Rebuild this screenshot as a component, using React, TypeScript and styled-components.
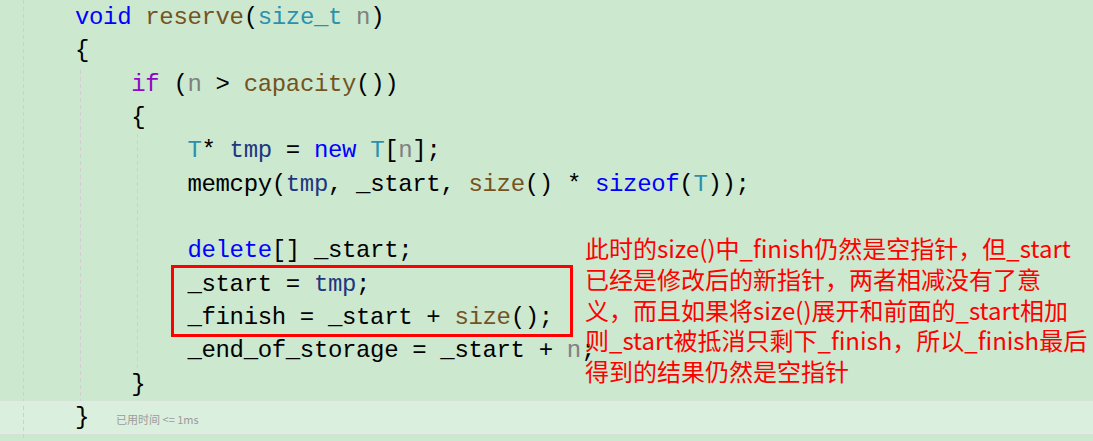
import React from "react";
import styled, { createGlobalStyle } from "styled-components";

const Global = createGlobalStyle`
  html, body { margin: 0; padding: 0; background: #cce8cf; }
  #root { width: 1093px; height: 441px; }
`;

const GUIDE = "repeating-linear-gradient(to bottom, #d4ccd4 0px, #d4ccd4 4px, transparent 4px, transparent 7px)";

const Editor = styled.div`
  position: relative;
  width: 1093px;
  height: 441px;
  overflow: hidden;
  background-color: #cce8cf;
  background-image: ${GUIDE};
  background-size: 1px 100%;
  background-position: 23px 0;
  background-repeat: repeat-y;
  background-attachment: fixed;
  padding-top: 1px;
  box-sizing: border-box;
`;

const Line = styled.div<{ $guides: number[]; $current?: boolean }>`
  height: 33.33px;
  box-sizing: border-box;
  padding-left: 75px;
  white-space: pre;
  font-family: "Liberation Mono", "DejaVu Sans Mono", monospace;
  font-size: 24px;
  letter-spacing: -0.35px;
  color: #000000;
  line-height: ${(p) => (p.$current ? "29.33px" : "33.33px")};
  background-color: ${(p) => (p.$current ? "#dbefde" : "transparent")};
  border-top: ${(p) => (p.$current ? "2px solid #e3e9e4" : "none")};
  border-bottom: ${(p) => (p.$current ? "2px solid #e3e9e4" : "none")};
  background-image: ${(p) => (p.$guides.length ? p.$guides.map(() => GUIDE).join(", ") : "none")};
  background-position: ${(p) => p.$guides.map((x) => `${x}px 0`).join(", ")};
  background-size: 1px 100%;
  background-repeat: repeat-y;
  background-attachment: fixed;
`;

const COLORS: Record<string, string> = {
  kw: "#0000ff",
  ctl: "#8f08c4",
  fn: "#74531f",
  ty: "#2b91af",
  par: "#808080",
  loc: "#1f377f",
  p: "#000000",
};

const Tok = styled.span<{ $c: string }>`
  color: ${(p) => p.$c};
`;

const Timing = styled.span`
  margin-left: 27px;
  font-family: "Noto Sans CJK SC", "Noto Sans", sans-serif;
  font-size: 11px;
  letter-spacing: 0;
  color: #9b9b9b;
`;

const Highlight = styled.div`
  position: absolute;
  left: 171px;
  top: 265px;
  width: 402px;
  height: 72px;
  box-sizing: border-box;
  border: 3px solid #ff0000;
`;

const Note = styled.div`
  position: absolute;
  left: 585px;
  top: 233px;
  font-family: "Noto Sans CJK SC", "Noto Sans", sans-serif;
  font-size: 24px;
  line-height: 30.75px;
  color: #ff0000;
`;

const NoteLine = styled.div`
  white-space: nowrap;
`;

type T = [string, string];

const lines: { toks: T[]; guides: number[]; current?: boolean }[] = [
  { toks: [["void", "kw"], [" ", "p"], ["reserve", "fn"], ["(", "p"], ["size_t", "ty"], [" ", "p"], ["n", "par"], [")", "p"]], guides: [23] },
  { toks: [["{", "p"]], guides: [23] },
  { toks: [["    ", "p"], ["if", "ctl"], [" (", "p"], ["n", "par"], [" > ", "p"], ["capacity", "fn"], ["())", "p"]], guides: [23, 80] },
  { toks: [["    {", "p"]], guides: [23, 80] },
  { toks: [["        ", "p"], ["T", "ty"], ["* ", "p"], ["tmp", "loc"], [" = ", "p"], ["new", "kw"], [" ", "p"], ["T", "ty"], ["[", "p"], ["n", "par"], ["];", "p"]], guides: [23, 80, 137] },
  { toks: [["        memcpy(", "p"], ["tmp", "loc"], [", _start, ", "p"], ["size", "fn"], ["() * ", "p"], ["sizeof", "kw"], ["(", "p"], ["T", "ty"], ["));", "p"]], guides: [23, 80, 137] },
  { toks: [["", "p"]], guides: [23, 80, 137] },
  { toks: [["        ", "p"], ["delete", "kw"], ["[] _start;", "p"]], guides: [23, 80, 137] },
  { toks: [["        _start = ", "p"], ["tmp", "loc"], [";", "p"]], guides: [23, 80, 137] },
  { toks: [["        _finish = _start + ", "p"], ["size", "fn"], ["();", "p"]], guides: [23, 80, 137] },
  { toks: [["        _end_of_storage = _start + ", "p"], ["n", "par"], [";", "p"]], guides: [23, 80, 137] },
  { toks: [["    }", "p"]], guides: [23, 80] },
  { toks: [["}", "p"]], guides: [23], current: true },
];

const noteLines = [
  "此时的size()中_finish仍然是空指针，但_start",
  "已经是修改后的新指针，两者相减没有了意",
  "义，而且如果将size()展开和前面的_start相加",
  "则_start被抵消只剩下_finish，所以_finish最后",
  "得到的结果仍然是空指针",
];

export default function App() {
  return (
    <>
      <Global />
      <Editor>
        {lines.map((l, i) => (
          <Line key={i} $guides={l.guides} $current={l.current}>
            {l.toks.map(([t, k], j) => (
              <Tok key={j} $c={COLORS[k]}>
                {t}
              </Tok>
            ))}
            {l.current && <Timing>已用时间 &lt;= 1ms</Timing>}
          </Line>
        ))}
        <Highlight />
        <Note>
          {noteLines.map((t, i) => (
            <NoteLine key={i}>{t}</NoteLine>
          ))}
        </Note>
      </Editor>
    </>
  );
}
